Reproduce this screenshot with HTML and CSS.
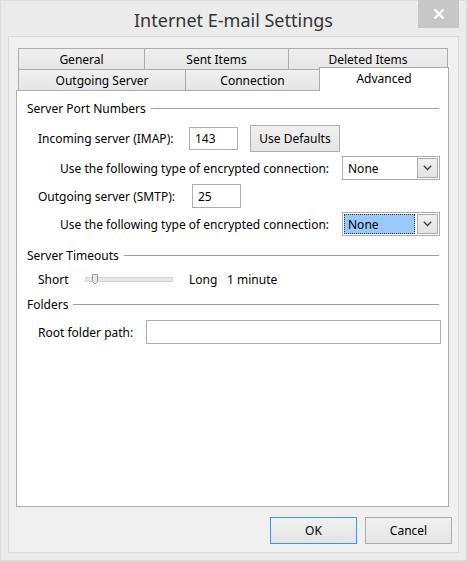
FILE: index.html
```html
<!DOCTYPE html>
<html>
<head>
<meta charset="utf-8">
<link rel="stylesheet" href="styles.css">
</head>
<body>
<div class="window">
  <div class="titlebar">
    <div class="title">Internet E-mail Settings</div>
    <div class="close"><svg width="12" height="12" viewBox="0 0 12 12"><path d="M1.5 1.5L10.5 10.5M10.5 1.5L1.5 10.5" stroke="#fff" stroke-width="2.2" fill="none"/></svg></div>
  </div>
  <div class="client">
    <div class="tabs">
      <div class="tabrow row1">
        <div class="tab t-general">General</div>
        <div class="tab t-sent">Sent Items</div>
        <div class="tab t-deleted last">Deleted Items</div>
      </div>
      <div class="tabrow row2">
        <div class="tab t-outgoing">Outgoing Server</div>
        <div class="tab t-connection">Connection</div>
        <div class="tab t-advanced active">Advanced</div>
      </div>
    </div>
    <div class="panel">
      <div class="group-head"><span>Server Port Numbers</span><div class="rule"></div></div>
      <div class="row r-imap">
        <span class="lbl w-imap">Incoming server (IMAP):</span>
        <div class="textbox port">143</div>
        <div class="btn defaults">Use Defaults</div>
      </div>
      <div class="row enc">
        <span class="lbl">Use the following type of encrypted connection:</span>
        <div class="combo"><span class="combo-val">None</span><span class="combo-btn"><svg width="9" height="6" viewBox="0 0 9 6"><path d="M0.8 0.8L4.5 4.5L8.2 0.8" stroke="#404040" stroke-width="1.4" fill="none"/></svg></span></div>
      </div>
      <div class="row r-smtp">
        <span class="lbl w-smtp">Outgoing server (SMTP):</span>
        <div class="textbox port">25</div>
      </div>
      <div class="row enc">
        <span class="lbl">Use the following type of encrypted connection:</span>
        <div class="combo"><span class="combo-val focused">None</span><span class="combo-btn"><svg width="9" height="6" viewBox="0 0 9 6"><path d="M0.8 0.8L4.5 4.5L8.2 0.8" stroke="#404040" stroke-width="1.4" fill="none"/></svg></span></div>
      </div>
      <div class="group-head g2"><span>Server Timeouts</span><div class="rule"></div></div>
      <div class="row r-time">
        <span class="lbl w-short">Short</span>
        <svg class="slider" width="90" height="12" viewBox="0 0 90 12"><rect x="0.5" y="3.5" width="87" height="4" fill="#e7e7e7" stroke="#d4d4d4"/><path d="M7.5 0.5H12.5V7.5L10 10L7.5 7.5Z" fill="#e8e8e8" stroke="#9a9a9a"/></svg>
        <span class="lbl w-long">Long</span>
        <span class="lbl">1 minute</span>
      </div>
      <div class="group-head g3"><span>Folders</span><div class="rule"></div></div>
      <div class="row r-root">
        <span class="lbl w-root">Root folder path:</span>
        <div class="textbox path"></div>
      </div>
    </div>
    <div class="buttons">
      <div class="btn dlg ok">OK</div>
      <div class="btn dlg">Cancel</div>
    </div>
  </div>
</div>
</body>
</html>
```
FILE: styles.css
```css
* { box-sizing: border-box; }
html, body { margin: 0; padding: 0; }
body {
  width: 467px;
  height: 561px;
  overflow: hidden;
  background: #ebebeb;
  font-family: "Segoe UI", "Noto Sans", sans-serif;
  font-size: 12px;
  color: #000;
}
.window {
  width: 467px;
  height: 561px;
  border: 1px solid #dcdcdc;
  background: #ebebeb;
}
.titlebar {
  height: 35px;
  position: relative;
  display: flex;
  justify-content: center;
  align-items: center;
  padding-top: 3px;
}
.title {
  font-size: 18px;
  color: #333;
}
.close {
  position: absolute;
  top: -1px;
  right: 7px;
  width: 41px;
  height: 28px;
  background: #c7c7c7;
  display: flex;
  align-items: center;
  justify-content: center;
}
.client {
  margin: 0 7px;
  height: 517px;
  border: 1px solid #dadada;
  background: #f0f0f0;
  padding: 11px 0 0 7px;
}
.tabs { margin-left: 2px; }
.tabrow { display: flex; height: 21px; }
.tab {
  height: 21px;
  border: 1px solid #acacac;
  border-bottom: none;
  border-right: none;
  background: linear-gradient(#f0f0f0, #e5e5e5);
  display: flex;
  align-items: center;
  justify-content: center;
}
.tab.last { border-right: 1px solid #acacac; }
.row2 .tab { padding-top: 1px; }
.t-general { width: 126px; }
.t-sent { width: 144px; }
.t-deleted { width: 160px; }
.t-outgoing { width: 167px; }
.t-connection { width: 134px; }
.tab.active {
  width: 130px;
  height: 24px;
  margin-top: -2px;
  background: #fff;
  border-right: 1px solid #acacac;
  position: relative;
  z-index: 1;
  align-items: flex-start;
  padding-top: 2px;
}
.panel {
  width: 433px;
  height: 417px;
  border: 1px solid #adadad;
  background: #fff;
  padding: 7px 7px 0 10px;
}
.group-head {
  display: flex;
  align-items: center;
  height: 20px;
}
.group-head .rule {
  flex: 1;
  height: 1px;
  background: #a0a0a0;
  margin-left: 5px;
  margin-right: 2px;
}
.g2 { margin-top: 9px; }
.g3 { margin-top: 5px; }
.row {
  display: flex;
  align-items: center;
  padding-left: 11px;
}
.lbl { white-space: nowrap; flex: none; }
.r-imap { height: 27px; margin-top: 7px; }
.w-imap { width: 151px; }
.w-smtp { width: 154px; }
.w-short { width: 47px; }
.w-long { width: 38px; }
.w-root { width: 108px; }
.textbox {
  border: 1px solid #abadb3;
  background: #fff;
  padding-left: 5px;
  display: flex;
  align-items: center;
}
.port { width: 49px; }
.r-imap .port { height: 23px; }
.r-smtp .port { height: 24px; }
.btn {
  border: 1px solid #adadad;
  background: linear-gradient(#f0f0f0, #e5e5e5);
  display: flex;
  align-items: center;
  justify-content: center;
}
.defaults { width: 90px; height: 27px; margin-left: 12px; }
.enc { height: 24px; margin-top: 4px; padding-left: 33px; }
.r-smtp { height: 24px; margin-top: 4px; }
.combo {
  margin-left: auto;
  margin-right: 1px;
  width: 98px;
  height: 24px;
  border: 1px solid #acacac;
  background: #fff;
  display: flex;
  align-items: center;
  padding: 1px;
}
.combo-val {
  flex: 1;
  height: 20px;
  display: flex;
  align-items: center;
  padding-left: 3px;
  margin-right: 2px;
  border: 1px solid transparent;
}
.combo-val.focused {
  background: #99c9ff;
  border: 1px dotted #333;
}
.combo-btn {
  width: 21px;
  height: 20px;
  border: 1px solid #acacac;
  background: linear-gradient(#f0f0f0, #e3e3e3);
  display: flex;
  align-items: center;
  justify-content: center;
}
.r-time { height: 20px; margin-top: 4px; }
.slider { flex: none; margin-right: 14px; margin-top: 1px; }
.r-root { height: 24px; margin-top: 6px; }
.path { width: 295px; height: 24px; }
.buttons {
  display: flex;
  justify-content: flex-end;
  gap: 8px;
  margin-top: 10px;
  margin-right: 6px;
}
.dlg { width: 87px; height: 27px; }
.ok { border-color: #3399ff; }
```
